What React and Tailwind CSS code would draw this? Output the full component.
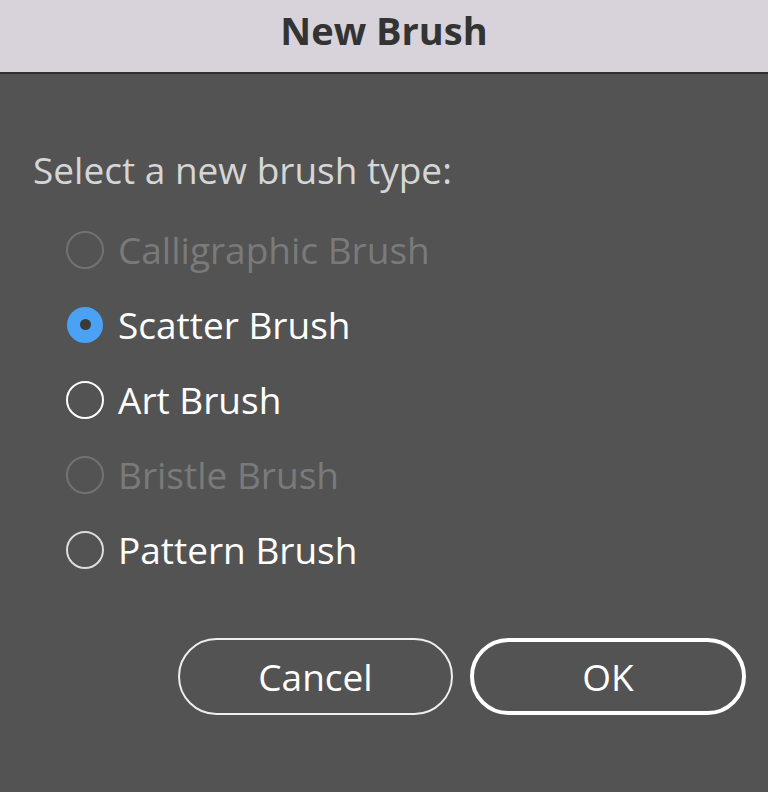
import React from "react";

const options = [
  { label: "Calligraphic Brush", state: "disabled" },
  { label: "Scatter Brush", state: "selected" },
  { label: "Art Brush", state: "normal" },
  { label: "Bristle Brush", state: "disabled" },
  { label: "Pattern Brush", state: "normal2" },
];

function Radio({ state }) {
  if (state === "selected") {
    return (
      <span className="flex h-[36px] w-[36px] items-center justify-center rounded-full bg-[#4ba1f4]">
        <span className="h-[11px] w-[11px] rounded-full bg-[#3a3a3a]" />
      </span>
    );
  }
  const cls =
    state === "disabled"
      ? "border-[#727272]"
      : state === "normal2"
      ? "border-[#dcdcdc]"
      : "border-white";
  return <span className={`block h-[38px] w-[38px] rounded-full border-[2.5px] ${cls}`} />;
}

export default function App() {
  return (
    <div
      className="flex h-[792px] w-[768px] flex-col bg-[#535353]"
      style={{ fontFamily: '"Open Sans", "Noto Sans", sans-serif' }}
    >
      <div className="flex h-[74px] items-center justify-center border-b-2 border-[#2f2f2f] bg-[#d8d3da] pb-[12px]">
        <span className="text-[38px] leading-[44px] font-bold text-[#333333]">New Brush</span>
      </div>
      <div className="flex flex-1 flex-col pl-[33px] pr-[22px]">
        <div className="mt-[72px] text-[37px] leading-[48px] text-[#d6d6d6]">Select a new brush type:</div>
        <div className="mt-[18px] flex flex-col pl-[33px]">
          {options.map((o) => (
            <div key={o.label} className="flex h-[75px] items-center gap-[14px]">
              <span className="flex w-[38px] items-center justify-center">
                <Radio state={o.state} />
              </span>
              <span
                className={`text-[37px] leading-[48px] ${
                  o.state === "disabled" ? "text-[#7a7a7a]" : "text-white"
                }`}
              >
                {o.label}
              </span>
            </div>
          ))}
        </div>
        <div className="mt-[51px] flex justify-end gap-[17px]">
          <button className="flex h-[77px] w-[275px] items-center justify-center rounded-full border-2 border-[#eeeeee] text-[37px] text-white">
            Cancel
          </button>
          <button className="flex h-[77px] w-[276px] items-center justify-center rounded-full border-[4px] border-white text-[37px] text-white">
            OK
          </button>
        </div>
      </div>
    </div>
  );
}
